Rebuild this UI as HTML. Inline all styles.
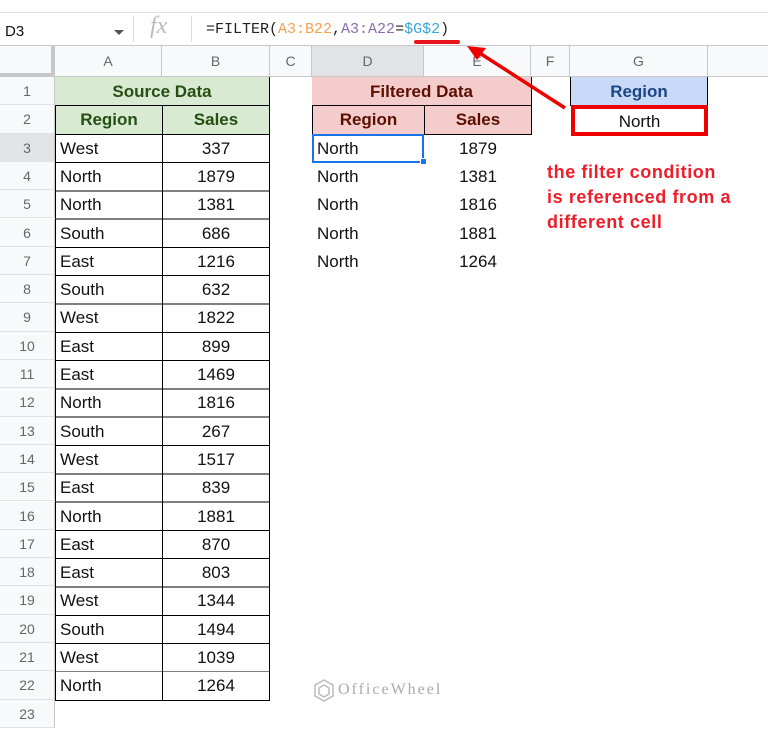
<!DOCTYPE html><html><head><style>
body{margin:0;width:768px;height:730px;overflow:hidden;background:#fff;font-family:"Liberation Sans",Arial,sans-serif;position:relative}
div{position:absolute;box-sizing:border-box}
.c{font-size:17px;color:#111;line-height:30px;white-space:nowrap}
.l{padding-left:5px}.m{text-align:center}
.rh{left:0;width:55px;background:#f8f9fa;border-right:1px solid #c7c7c7;border-bottom:1px solid #e2e2e3;color:#666;font-size:14px;text-align:center;line-height:29px}
.ch{top:45px;height:32px;background:#f8f9fa;border-right:1px solid #c7c7c7;border-bottom:1px solid #c7c7c7;color:#666;font-size:14px;text-align:center;line-height:32px}
.bx{border:1px solid #000;line-height:28px}
</style></head><body>
<div style="left:0;top:0;width:768px;height:13px;background:#fff;border-bottom:1px solid #e0e0e0"></div>
<div class="c" style="left:5px;top:17px;font-size:15px">D3</div>
<div style="left:114px;top:30px;width:0;height:0;border-left:5px solid transparent;border-right:5px solid transparent;border-top:5px solid #555"></div>
<div style="left:133px;top:16px;width:1px;height:26px;background:#ddd"></div>
<div style="left:150px;top:13px;font-family:'Liberation Serif',serif;font-style:italic;font-size:24px;color:#bbb">fx</div>
<div style="left:191px;top:16px;width:1px;height:26px;background:#ddd"></div>
<div style="left:206px;top:21px;font-family:'Liberation Mono',monospace;font-size:15px;color:#222;white-space:nowrap">=FILTER(<span style="color:#f4a14e">A3:B22</span>,<span style="color:#8e6db0">A3:A22</span>=<span style="color:#3ba5d9">$G$2</span>)</div>
<div style="left:414px;top:40px;width:46px;height:4px;background:#e8141c;border-radius:2px"></div>

<div style="left:0;top:45px;width:55px;height:32px;background:#f8f9fa;border-right:4px solid #c7c7c7;border-bottom:4px solid #c7c7c7"></div>
<div class="ch" style="left:55px;width:107px">A</div>
<div class="ch" style="left:162px;width:108px">B</div>
<div class="ch" style="left:270px;width:42px">C</div>
<div class="ch" style="left:312px;width:112px;background:#e1e3e6">D</div>
<div class="ch" style="left:424px;width:107px">E</div>
<div class="ch" style="left:531px;width:39px">F</div>
<div class="ch" style="left:570px;width:138px">G</div>
<div class="ch" style="left:708px;width:60px;border-right:none"></div>
<div style="left:0;top:45px;width:768px;height:1px;background:#c7c7c7"></div>

<div class="rh" style="top:77px;height:28.3px">1</div>
<div class="rh" style="top:105.3px;height:28.3px">2</div>
<div class="rh" style="top:133.6px;height:28.3px;background:#e1e3e6">3</div>
<div class="rh" style="top:161.9px;height:28.3px">4</div>
<div class="rh" style="top:190.2px;height:28.3px">5</div>
<div class="rh" style="top:218.5px;height:28.3px">6</div>
<div class="rh" style="top:246.8px;height:28.3px">7</div>
<div class="rh" style="top:275.1px;height:28.3px">8</div>
<div class="rh" style="top:303.4px;height:28.3px">9</div>
<div class="rh" style="top:331.7px;height:28.3px">10</div>
<div class="rh" style="top:360px;height:28.3px">11</div>
<div class="rh" style="top:388.3px;height:28.3px">12</div>
<div class="rh" style="top:416.6px;height:28.3px">13</div>
<div class="rh" style="top:444.9px;height:28.3px">14</div>
<div class="rh" style="top:473.2px;height:28.3px">15</div>
<div class="rh" style="top:501.5px;height:28.3px">16</div>
<div class="rh" style="top:529.8px;height:28.3px">17</div>
<div class="rh" style="top:558.1px;height:28.3px">18</div>
<div class="rh" style="top:586.4px;height:28.3px">19</div>
<div class="rh" style="top:614.7px;height:28.3px">20</div>
<div class="rh" style="top:643px;height:28.3px">21</div>
<div class="rh" style="top:671.3px;height:28.3px">22</div>
<div class="rh" style="top:699.6px;height:28.3px">23</div>

<div class="c m" style="left:55px;top:77px;width:215px;height:28.3px;background:#d9ead3;color:#274e13;font-weight:bold;border-right:1px solid #000">Source Data</div>
<div class="c m bx" style="left:55px;top:105.3px;width:108px;height:29.3px;background:#d9ead3;color:#274e13;font-weight:bold">Region</div>
<div class="c m bx" style="left:162px;top:105.3px;width:108px;height:29.3px;background:#d9ead3;color:#274e13;font-weight:bold">Sales</div>
<div style="left:55px;top:133.6px;width:215px;height:567px;border:1px solid #000;border-top:none"></div>
<div style="left:162px;top:133.6px;width:1px;height:567px;background:#000"></div>
<div style="left:55px;top:161.9px;width:215px;height:510px;background:repeating-linear-gradient(#000 0 1px,transparent 1px 28.3px)"></div>
<div class="c l" style="left:55px;top:133.6px">West</div><div class="c m" style="left:162px;width:108px;top:133.6px">337</div>
<div class="c l" style="left:55px;top:161.9px">North</div><div class="c m" style="left:162px;width:108px;top:161.9px">1879</div>
<div class="c l" style="left:55px;top:190.2px">North</div><div class="c m" style="left:162px;width:108px;top:190.2px">1381</div>
<div class="c l" style="left:55px;top:218.5px">South</div><div class="c m" style="left:162px;width:108px;top:218.5px">686</div>
<div class="c l" style="left:55px;top:246.8px">East</div><div class="c m" style="left:162px;width:108px;top:246.8px">1216</div>
<div class="c l" style="left:55px;top:275.1px">South</div><div class="c m" style="left:162px;width:108px;top:275.1px">632</div>
<div class="c l" style="left:55px;top:303.4px">West</div><div class="c m" style="left:162px;width:108px;top:303.4px">1822</div>
<div class="c l" style="left:55px;top:331.7px">East</div><div class="c m" style="left:162px;width:108px;top:331.7px">899</div>
<div class="c l" style="left:55px;top:360px">East</div><div class="c m" style="left:162px;width:108px;top:360px">1469</div>
<div class="c l" style="left:55px;top:388.3px">North</div><div class="c m" style="left:162px;width:108px;top:388.3px">1816</div>
<div class="c l" style="left:55px;top:416.6px">South</div><div class="c m" style="left:162px;width:108px;top:416.6px">267</div>
<div class="c l" style="left:55px;top:444.9px">West</div><div class="c m" style="left:162px;width:108px;top:444.9px">1517</div>
<div class="c l" style="left:55px;top:473.2px">East</div><div class="c m" style="left:162px;width:108px;top:473.2px">839</div>
<div class="c l" style="left:55px;top:501.5px">North</div><div class="c m" style="left:162px;width:108px;top:501.5px">1881</div>
<div class="c l" style="left:55px;top:529.8px">East</div><div class="c m" style="left:162px;width:108px;top:529.8px">870</div>
<div class="c l" style="left:55px;top:558.1px">East</div><div class="c m" style="left:162px;width:108px;top:558.1px">803</div>
<div class="c l" style="left:55px;top:586.4px">West</div><div class="c m" style="left:162px;width:108px;top:586.4px">1344</div>
<div class="c l" style="left:55px;top:614.7px">South</div><div class="c m" style="left:162px;width:108px;top:614.7px">1494</div>
<div class="c l" style="left:55px;top:643px">West</div><div class="c m" style="left:162px;width:108px;top:643px">1039</div>
<div class="c l" style="left:55px;top:671.3px">North</div><div class="c m" style="left:162px;width:108px;top:671.3px">1264</div>

<div class="c m" style="left:312px;top:77px;width:220px;height:28.3px;background:#f4cccc;color:#5b0f00;font-weight:bold;border-right:1px solid #000">Filtered Data</div>
<div class="c m bx" style="left:312px;top:105.3px;width:113px;height:29.3px;background:#f4cccc;color:#5b0f00;font-weight:bold">Region</div>
<div class="c m bx" style="left:424px;top:105.3px;width:108px;height:29.3px;background:#f4cccc;color:#5b0f00;font-weight:bold">Sales</div>
<div style="left:312px;top:133.6px;width:112px;height:29px;border:2px solid #1a73e8"></div>
<div style="left:420px;top:158px;width:7px;height:7px;background:#1a73e8;border:1px solid #fff"></div>
<div class="c l" style="left:312px;top:133.6px">North</div><div class="c m" style="left:424px;width:108px;top:133.6px">1879</div>
<div class="c l" style="left:312px;top:161.9px">North</div><div class="c m" style="left:424px;width:108px;top:161.9px">1381</div>
<div class="c l" style="left:312px;top:190.2px">North</div><div class="c m" style="left:424px;width:108px;top:190.2px">1816</div>
<div class="c l" style="left:312px;top:218.5px">North</div><div class="c m" style="left:424px;width:108px;top:218.5px">1881</div>
<div class="c l" style="left:312px;top:246.8px">North</div><div class="c m" style="left:424px;width:108px;top:246.8px">1264</div>

<div class="c m" style="left:570px;top:77px;width:138px;height:29px;background:#c9daf8;color:#1c4587;font-weight:bold;border-right:1px solid #000;border-left:1px solid #000">Region</div>
<div class="c m" style="left:571px;top:105px;width:137px;height:31px;border:4px solid #ee0000;line-height:25px">North</div>

<div style="left:547px;top:160px;color:#ee1d2a;font-weight:bold;font-size:18px;letter-spacing:0.6px;line-height:25px;white-space:nowrap">the filter condition<br>is referenced from a<br>different cell</div>

<svg style="position:absolute;left:0;top:0" width="768" height="730">
<line x1="565" y1="108" x2="478" y2="52" stroke="#ee0000" stroke-width="3.5"/>
<polygon points="467,46 486,48 477,60" fill="#ee0000"/>
<g transform="translate(314,680)" fill="none" stroke="#bbb" stroke-width="1.5"><polygon points="10,0 19,5 19,16 10,21 1,16 1,5"/><polygon points="10,5 15,8 15,14 10,17 5,14 5,8"/></g>
</svg>
<div style="left:338px;top:681px;font-family:'Liberation Serif',serif;font-size:16px;letter-spacing:2px;color:#aaa">OfficeWheel</div>
</body></html>
